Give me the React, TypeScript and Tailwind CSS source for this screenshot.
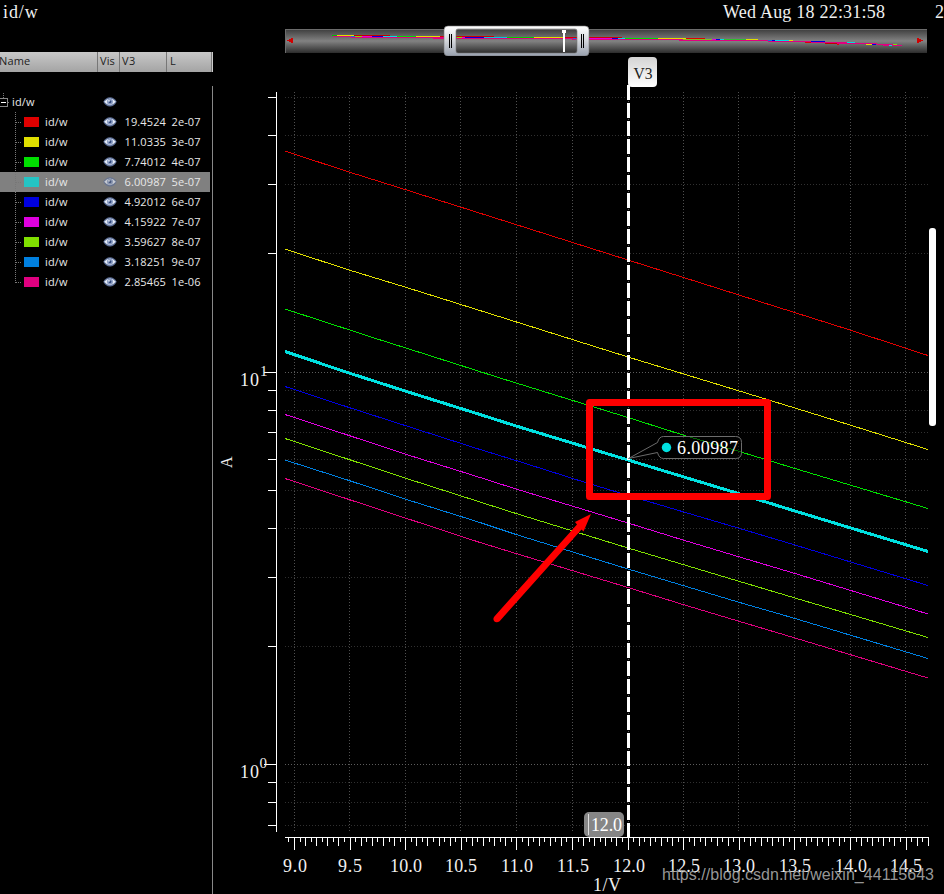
import React from 'react';

const SERIF = '"Liberation Serif", serif';

const traces = [
  { color: '#e00000', v3: '19.4524', l: '2e-07', w: 1, pts: '285,151 294,154 349,172 405,189.5 628,260 850,330 928,355.5' },
  { color: '#e0e000', v3: '11.0335', l: '3e-07', w: 1, pts: '285,249 294,252 349,270 405,287 628,357 705,380.5 790,406.5 850,425 928,449.5' },
  { color: '#00e000', v3: '7.74012', l: '4e-07', w: 1, pts: '285,309 382,340.5 420,352.5 508,380.5 628,417.5 683,435 741,452 790,467 850,485 928,508.5' },
  { color: '#00e0e0', v3: '6.00987', l: '5e-07', w: 3, pts: '285,351.5 349,373 405,391 480,414.5 516,426 628,460 740,494 790,509.5 928,551.5' },
  { color: '#0000e0', v3: '4.92012', l: '6e-07', w: 1, pts: '285,386.5 349,407.5 405,425.5 480,449.5 516,460.5 587,483 645,500.5 738,528 790,543.5 928,585.5' },
  { color: '#e000e0', v3: '4.15922', l: '7e-07', w: 1, pts: '285,414.5 349,435.5 405,454 480,477.5 516,489 628,523 683,540 738,556.5 790,572 928,614' },
  { color: '#80e000', v3: '3.59627', l: '8e-07', w: 1, pts: '285,438.5 349,459.5 405,478 480,502 516,513.5 628,548 683,564.5 738,581 790,596.5 928,637.5' },
  { color: '#0080e0', v3: '3.18251', l: '9e-07', w: 1, pts: '285,460 349,480.5 405,499 480,522.5 516,534.5 628,569 683,585.5 738,602 790,617 928,658.5' },
  { color: '#e00080', v3: '2.85465', l: '1e-06', w: 1, pts: '285,478.5 349,499.5 480,542.5 516,553.5 572,570.5 628,587.5 683,604.5 738,621 790,636.5 928,678' },
];

const gridX = [294, 349, 405, 460, 516, 572, 628, 683, 738, 794, 850, 905];
const gridY = [97, 135, 184, 253, 372, 390, 410, 432, 459, 490, 528, 577, 646, 764, 782, 802, 825];
const isDecade = (y: number) => y === 372 || y === 764;

// Segments of the overview strip: x1, x2, y, colour
const overview: [number, number, number, string][] = [
  [332, 337, 35, '#00c000'], [337, 354, 35, '#e0e000'], [354, 390, 35, '#c00000'],
  [333, 351, 36, '#e00080'], [351, 355, 36, '#0080e0'], [355, 362, 36, '#80e000'], [362, 372, 36, '#e000e0'],
  [372, 383, 36, '#0000e0'], [383, 397, 36, '#00e0e0'], [397, 416, 36, '#00e000'], [416, 440, 36, '#e0e000'], [440, 494, 36, '#d00000'],
  [351, 444, 37, '#e00080'], [433, 457, 38, '#e00080'],
  [457, 462, 37, '#80e000'], [462, 465, 37, '#e000e0'], [465, 484, 37, '#0000e0'], [484, 507, 37, '#00c8e0'],
  [507, 534, 37, '#00d000'], [534, 564, 37, '#e0e000'], [564, 622, 37, '#d00000'],
  [457, 577, 38, '#e00080'], [572, 576, 39, '#e00080'], [573, 576, 38, '#0080e0'],
  [589, 612, 38, '#e000e0'], [612, 618, 38, '#0000e0'], [618, 625, 38, '#00e0e0'], [625, 658, 38, '#00e000'],
  [658, 686, 38, '#e0e000'], [686, 705, 38, '#e00000'],
  [589, 683, 39, '#e00080'], [683, 712, 39, '#80c020'], [712, 716, 39, '#e000e0'], [716, 720, 39, '#0000e0'],
  [720, 724, 39, '#00e0e0'], [724, 746, 39, '#30c030'], [746, 758, 39, '#e0e000'],
  [679, 768, 40, '#e00080'], [768, 772, 40, '#0080e0'], [772, 775, 40, '#0000e0'], [775, 789, 40, '#00e0e0'], [789, 793, 40, '#e0e000'],
  [768, 813, 41, '#e00080'], [811, 825, 41, '#0000e0'], [805, 847, 42, '#e00080'], [805, 811, 42, '#e00000'],
  [847, 855, 42, '#00e0e0'], [825, 877, 43, '#e00080'], [825, 837, 43, '#c00000'], [837, 839, 44, '#e00000'],
  [866, 872, 44, '#e0e000'], [872, 876, 44, '#0000e0'], [877, 893, 44, '#e00080'], [893, 897, 44, '#80e000'],
  [883, 902, 45, '#e00080'], [889, 892, 45, '#00e0e0'],
];

function Eye({ dim = false }: { dim?: boolean }) {
  return (
    <svg width="14" height="12" viewBox="0 0 14 12" className={dim ? 'opacity-70' : ''}>
      <path d="M0.3 5.8Q2.7 1.2 7 1.2T13.7 5.8Q11.3 10.5 7 10.5T0.3 5.8Z" fill="#5d6f96" />
      <path d="M1.2 5.8Q4 2.6 7 2.6T12.8 5.8Q10 9.2 7 9.2T1.2 5.8Z" fill="#e4eaf5" />
      <circle cx="7" cy="5.8" r="3" fill="#8a9cc2" />
      <circle cx="7" cy="5.8" r="1.4" fill="#30477a" />
      <circle cx="6" cy="4.8" r="0.9" fill="#dfe6f3" />
    </svg>
  );
}

function Sidebar() {
  return (
    <div className="flex w-[213px] shrink-0 flex-col pt-[27px] text-[11px] leading-[20px] tracking-[0.12px]" style={{ fontFamily: '"Open Sans", "Noto Sans", sans-serif' }}>
      <div className="flex h-5 shrink-0 bg-linear-to-b from-[#c8c8c8] to-[#a4a4a4] leading-[18px] text-[#222]">
        <div className="w-[98px] border-r border-[#777]"><span className="-ml-px">Name</span></div>
        <div className="w-[22px] border-r border-[#777] pl-[2px]">Vis</div>
        <div className="w-[47px] border-r border-[#777] pl-[2px] tracking-[0.5px]">V3</div>
        <div className="w-[45px] border-r border-[#777] pl-[3px]">L</div>
        <div className="w-px bg-[#ccc]" />
      </div>
      <div className="mt-[14px] flex-1 border-r border-[#888] pt-[6px] text-[#e8e8e8]">
        <div className="flex h-5 items-center">
          <svg width="12" height="20" shapeRendering="crispEdges">
            <path d="M3.5 1v5" stroke="#777" strokeDasharray="1 1" />
            <rect x="-1.5" y="6.5" width="9" height="8" fill="#000" stroke="#888" />
            <path d="M1 10.5h5" stroke="#fff" />
            <path d="M8 10.5h1" stroke="#777" />
          </svg>
          <span className="w-[91px]">id/w</span>
          <Eye />
        </div>
        {traces.map((t, i) => (
          <div key={t.l} className={'flex h-5 w-[210px] items-center ' + (i === 3 ? 'bg-[#808080]' : '')}>
            <svg width="24" height="20" shapeRendering="crispEdges">
              <path d={i === 8 ? 'M15.5 0v11' : 'M15.5 0v20'} stroke="#777" strokeDasharray="1 1" />
              <path d="M16 10.5h6" stroke="#777" strokeDasharray="1 1" />
            </svg>
            <div className="h-[10px] w-[15px]" style={{ backgroundColor: i === 3 ? '#24c4c4' : t.color }} />
            <span className="w-[64px] pl-[6px]">id/w</span>
            <Eye dim={i === 3} />
            <span className="w-[54px] pl-[7.5px]">{t.v3}</span>
            <span className="pl-[0.5px]">{t.l}</span>
          </div>
        ))}
      </div>
    </div>
  );
}

function Overview() {
  return (
    <svg className="block" width="731" height="31" viewBox="213 25 731 31" shapeRendering="crispEdges">
      <defs>
        <linearGradient id="bar" x1="0" y1="0" x2="0" y2="1">
          <stop offset="0" stopColor="#3c3c3c" />
          <stop offset="0.5" stopColor="#828282" />
          <stop offset="1" stopColor="#2c2c2c" />
        </linearGradient>
        <linearGradient id="thumb" x1="0" y1="0" x2="0" y2="1">
          <stop offset="0" stopColor="#ffffff" />
          <stop offset="0.45" stopColor="#d8dade" />
          <stop offset="1" stopColor="#98a0ae" />
        </linearGradient>
      </defs>
      <rect x="285" y="29" width="642" height="24" fill="url(#bar)" />
      <path d="M285 29.5H927M285.5 30V53" stroke="#6c6c6c" />
      <path d="M287 40.5L293 37.5V43.5Z" fill="#d00000" />
      <path d="M923 40.5L917 37.5V43.5Z" fill="#d00000" />
      {overview.map(([a, b, y, c], i) => (
        <rect key={i} x={a} y={y} width={b - a} height="1" fill={c} />
      ))}
      <path fillRule="evenodd" shapeRendering="auto" fill="url(#thumb)" stroke="#777" strokeWidth="0.6"
        d="M448 26H585Q589 26 589 30V52Q589 56 585 56H448Q444 56 444 52V30Q444 26 448 26ZM458 29Q456 29 456 31V51Q456 53 458 53H575Q577 53 577 51V31Q577 29 575 29Z" />
      <path d="M449.5 34V48M451.5 34V48M581.5 34V48M583.5 34V48" stroke="#000" />
      <path d="M563 30h2v22h-2zM562 30h4v3h-4z" fill="#fff" />
    </svg>
  );
}

function Chart() {
  const ticks = Array.from({ length: 116 }, (_, k) => k - 1);
  return (
    <svg className="block" width="731" height="838" viewBox="213 56 731 838" style={{ fontFamily: SERIF }}>
      <defs>
        <linearGradient id="tag" x1="0" y1="0" x2="0" y2="1">
          <stop offset="0" stopColor="#d4d4d4" />
          <stop offset="1" stopColor="#ffffff" />
        </linearGradient>
      </defs>
      <g shapeRendering="crispEdges" fill="none">
        {gridX.map((x) => (
          <path key={x} d={`M${x + 0.5} 92V832`} stroke="#505050" strokeDasharray="1 2" />
        ))}
        {gridY.map((y) => (
          <path key={y} d={`M285 ${y + 0.5}H929`} stroke={isDecade(y) ? '#5c5c5c' : '#303030'} strokeDasharray="1 2" />
        ))}
        <path d="M276.5 92V832M285 837.5H929" stroke="#fff" />
        {gridY.map((y) => (
          <path key={y} d={`M${isDecade(y) ? 264 : 268} ${y + 0.5}H276`} stroke="#fff" />
        ))}
        {ticks.map((k) => {
          const x = Math.min(928, Math.round(294 + k * 5.56)) + 0.5;
          const end = k % 10 === 0 ? 850 : k % 2 === 0 ? 846 : 842;
          return <path key={k} d={`M${x} 838V${end}`} stroke="#fff" />;
        })}
        {traces.map((t) => (
          <polyline key={t.l} points={t.pts} stroke={t.color} strokeWidth={t.w} />
        ))}
        <path d="M628.5 85V837" stroke="#fff" strokeWidth="3" strokeDasharray="15 3" />
      </g>

      <g fill="#f0f0f0" fontSize="18">
        {gridX.map((x, i) => {
          const label = (9 + i * 0.5).toFixed(1);
          const w = label.length === 3 ? 24 : 32;
          return <text key={x} x={x + 1 - w / 2} y="871.5" textLength={w}>{label}</text>;
        })}
        <text x="593" y="891" textLength="28">1/V</text>
        <text x="240" y="386" textLength="19">10</text>
        <text x="260" y="376" fontSize="15">1</text>
        <text x="240" y="778" textLength="19">10</text>
        <text x="259.5" y="768" fontSize="15">0</text>
        <text transform="translate(232 468) rotate(-90)" fontSize="16">A</text>
      </g>

      <rect x="628" y="57" width="29" height="30" rx="4" fill="url(#tag)" />
      <text x="633.5" y="79" fontSize="17" fill="#222" textLength="19" lengthAdjust="spacingAndGlyphs">V3</text>

      <rect x="584" y="812" width="40" height="25" rx="5" fill="#868686" />
      <path d="M588.5 814V835" stroke="#ddd" />
      <text x="591" y="831" fontSize="18" fill="#fff" textLength="31">12.0</text>

      <path d="M663.5 436.5H735.5Q741.5 436.5 741.5 442.5V452.5Q741.5 458.5 735.5 458.5H663.5Q659 458.5 657.5 452.5L628.5 458.5L657.5 442.5Q659 436.5 663.5 436.5Z" fill="#000" fillOpacity="0.55" stroke="#6c6c6c" />
      <circle cx="666.5" cy="447.5" r="4.7" fill="#00e0e0" />
      <text x="677" y="454" fontSize="18" fill="#fff" textLength="61">6.00987</text>

      <rect x="589.5" y="402.5" width="178" height="94" fill="none" stroke="#f00" strokeWidth="7" strokeLinejoin="round" />
      <path d="M494.4 616.4L577 524.5L575 522L591 514L583.5 531.5L581.5 529.5L499.6 621.2Q496.5 623.5 494.2 621.2Q492.5 619 494.4 616.4Z" fill="#f00" />

      <rect x="929" y="228" width="7" height="198" rx="3" fill="#fff" />
      <text x="662" y="880" fontSize="16" fill="#aaa" fillOpacity="0.9" textLength="272" style={{ fontFamily: '"Liberation Sans", sans-serif' }}>
        https://blog.csdn.net/weixin_44115643
      </text>
    </svg>
  );
}

export default function App() {
  return (
    <div className="flex h-[894px] w-[944px] flex-col overflow-hidden bg-black">
      <div className="flex h-[25px] shrink-0 items-center overflow-hidden pl-[3px] text-[18px] whitespace-nowrap text-[#f0f0f0]" style={{ fontFamily: SERIF }}>
        <span className="w-[720px] tracking-[0.9px]">id/w</span>
        <span className="w-[212px] tracking-[0.22px]">Wed Aug 18 22:31:58</span>
        <span>2</span>
      </div>
      <div className="flex flex-1">
        <Sidebar />
        <div className="flex w-[731px] flex-col">
          <Overview />
          <Chart />
        </div>
      </div>
    </div>
  );
}
